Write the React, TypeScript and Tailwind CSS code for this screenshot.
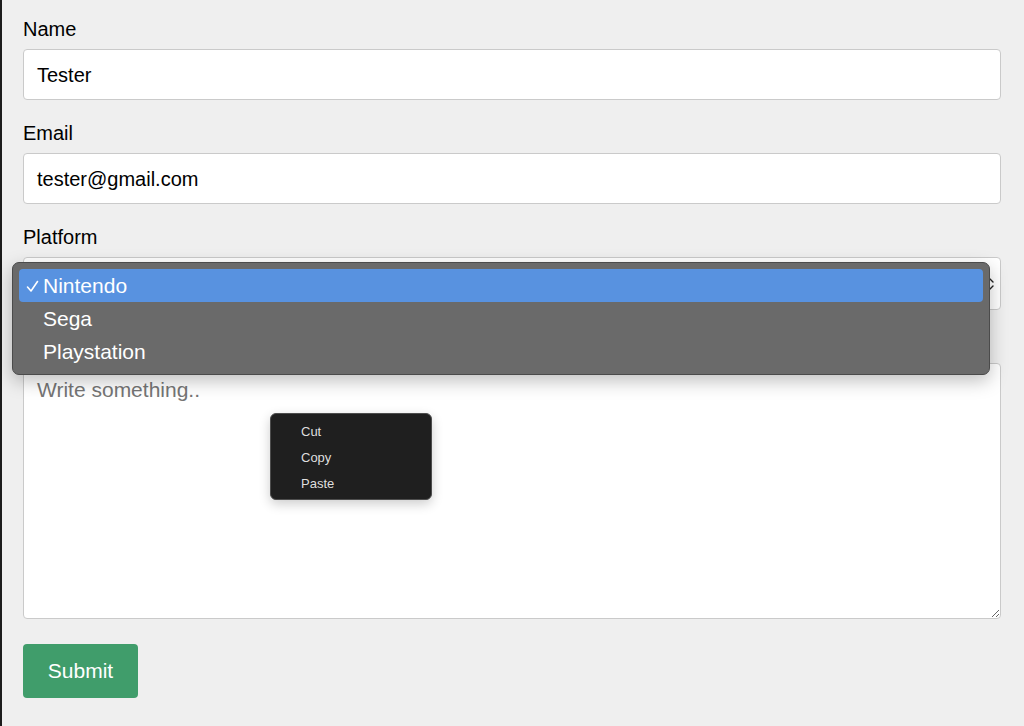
const police = "font-['Liberation_Sans',Arial,sans-serif]";

const PLATEFORMES = ['Nintendo', 'Sega', 'Playstation'];
const ACTIONS = ['Cut', 'Copy', 'Paste'];

function Champ({ label, children }: { label: string; children: React.ReactNode }) {
  return (
    <div className="mb-[21px]">
      <label className="block h-[26px] text-[20px] leading-[25px] text-black">{label}</label>
      <div className="mt-[6px]">{children}</div>
    </div>
  );
}

function Saisie({ valeur }: { valeur: string }) {
  return (
    <div className="flex h-[51px] items-center rounded-[4px] border border-[#cacaca] bg-white px-[13px] text-[20px] text-black">
      {valeur}
    </div>
  );
}

function ListeDeroulante() {
  // La liste native ouverte : elle recouvre le select et le libellé suivant.
  return (
    <div className="absolute left-[10px] top-[262px] w-[978px] rounded-[7px] border border-[#4b4b4b] bg-[#6a6a6a] p-[6px] shadow-[0_6px_18px_rgba(0,0,0,0.25)]">
      {PLATEFORMES.map((p, i) => (
        <div
          key={p}
          className={`relative flex h-[33px] items-center rounded-[4px] pl-[24px] text-[21px] text-white ${
            i === 0 ? 'bg-[#5892e0]' : ''
          }`}
        >
          {i === 0 && (
            <svg
              className="absolute left-[7px] top-[11px] h-[13px] w-[13px]"
              viewBox="0 0 13 13"
              fill="none"
              stroke="white"
              strokeWidth="1.6"
              aria-hidden="true"
            >
              <path d="M1.5 7 5 11 11.5 1.5" strokeLinecap="round" strokeLinejoin="round" />
            </svg>
          )}
          {p}
        </div>
      ))}
    </div>
  );
}

function MenuContextuel() {
  return (
    <div className="absolute left-[268px] top-[413px] w-[162px] rounded-[6px] border border-[#4d4d4d] bg-[#1f1f1f] pb-[2px] pt-[5px] shadow-[0_4px_12px_rgba(0,0,0,0.2)]">
      {ACTIONS.map((a) => (
        <div key={a} className="flex h-[26px] items-center pl-[30px] text-[13px] text-[#dedede]">
          {a}
        </div>
      ))}
    </div>
  );
}

export default function App() {
  return (
    <div className={`${police} relative min-h-[726px] border-l-2 border-[#1c1c1c] bg-[#efefef] pl-[21px] pr-[23px] pt-[17px]`}>
      <form>
        <Champ label="Name">
          <Saisie valeur="Tester" />
        </Champ>
        <Champ label="Email">
          <Saisie valeur="tester@gmail.com" />
        </Champ>
        <Champ label="Platform">
          {/* Le select fermé, caché presque entièrement par sa liste ouverte */}
          <div className="flex h-[53px] items-center justify-end rounded-[4px] border border-[#cacaca] bg-white px-[6px]">
            <svg className="h-[14px] w-[8px]" viewBox="0 0 8 14" fill="none" stroke="#222" strokeWidth="1.4" aria-hidden="true">
              <path d="M1 5 4 2l3 3M1 9l3 3 3-3" strokeLinecap="round" strokeLinejoin="round" />
            </svg>
          </div>
        </Champ>
        <div>
          <div className="h-[26px]" />
          <textarea
            readOnly
            placeholder="Write something.."
            className="mt-[6px] block h-[256px] w-full resize rounded-[4px] border border-[#cacaca] bg-white px-[13px] py-[13px] text-[21px] leading-[26px] placeholder:text-[#757575] focus:outline-none"
          />
        </div>
        <button
          type="button"
          className="mt-[25px] h-[54px] w-[115px] rounded-[4px] bg-[#409d6b] text-[21px] text-white"
        >
          Submit
        </button>
      </form>

      <ListeDeroulante />
      <MenuContextuel />
    </div>
  );
}
